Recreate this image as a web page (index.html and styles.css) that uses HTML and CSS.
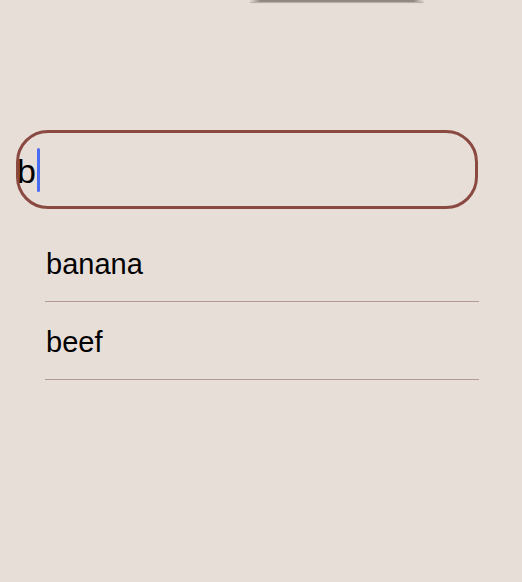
FILE: index.html
```
<!DOCTYPE html>
<html>
<head>
<meta charset="utf-8">
<link rel="stylesheet" href="styles.css">
</head>
<body>
<div class="topbar"></div>
<div class="search">
  <span class="query">b</span><span class="caret"></span>
</div>
<ul class="results">
  <li class="row">banana</li>
  <li class="row">beef</li>
</ul>
</body>
</html>
```
FILE: styles.css
```
html, body {
  margin: 0;
  padding: 0;
}
body {
  background: #e7ded8;
  font-family: "Liberation Sans", Arial, sans-serif;
  color: #000;
  width: 522px;
  height: 582px;
  overflow: hidden;
}
.topbar {
  margin-left: 250px;
  width: 174px;
  height: 2px;
  background: linear-gradient(90deg, rgba(150,144,136,0) 0%, #8f897f 6%, #8f897f 94%, rgba(150,144,136,0) 100%);
  border-radius: 0 0 8px 8px;
  box-shadow: 0 1px 1px rgba(90, 84, 78, 0.35);
}
.search {
  box-sizing: border-box;
  margin: 128px 0 0 16px;
  width: 462px;
  height: 79px;
  border: 3px solid #8a4a42;
  border-radius: 32px;
  display: flex;
  align-items: center;
}
.query {
  font-size: 34px;
  line-height: 1;
  margin-left: -2px;
  padding-top: 2px;
}
.caret {
  width: 3px;
  height: 44px;
  background: #4a6cf2;
  border-radius: 2px;
  margin-left: 1px;
}
.results {
  list-style: none;
  margin: 15px 0 0 45px;
  padding: 0;
  width: 434px;
}
.row {
  box-sizing: border-box;
  height: 78px;
  border-bottom: 1px solid #b39b93;
  display: flex;
  align-items: center;
  padding-left: 1px;
  padding-top: 3px;
  font-size: 29px;
}
```
